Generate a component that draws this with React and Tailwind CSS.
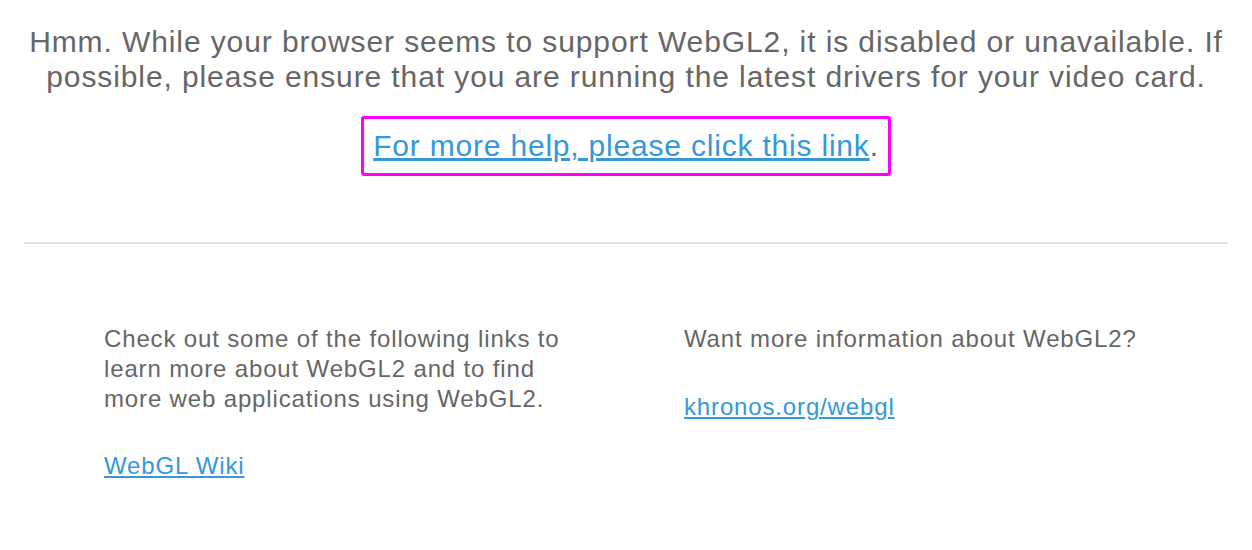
export default function App() {
    return (
        <div className="w-[1252px] h-[550px] bg-white px-[24px] pt-[24px] text-[#666666] font-['Liberation_Sans',Arial,sans-serif]">
            {/* Message */}
            <p className="text-center text-[30px] leading-[35px] tracking-[0.9px]">
                Hmm. While your browser seems to support WebGL2, it is disabled or unavailable. If possible, please ensure that you are running the latest drivers for your video card.
            </p>
            <div className="flex justify-center mt-[22px]">
                <div className="border-[3px] border-[#ff00ff] rounded-[3px] px-[9px] py-[9px] text-[30px] leading-[36px] tracking-[0.8px]">
                    <a href="#" className="text-[#3498db] underline">For more help, please click this link</a>.
                </div>
            </div>

            <hr className="mt-[66px] border-0 h-[2px] bg-[#e3e3e3]" />

            {/* Links */}
            <div className="flex mt-[80px] text-[24px] leading-[30px] tracking-[0.85px]">
                <div className="w-[580px] pl-[80px] pr-[20px]">
                    <p className="mb-[37px]">
                        Check out some of the following links to learn more about WebGL2 and to find more web applications using WebGL2.
                    </p>
                    <a href="#" className="text-[#3498db] underline">WebGL Wiki</a>
                </div>
                <div className="w-[580px] pl-[80px]">
                    <p className="mb-[38px]">Want more information about WebGL2?</p>
                    <a href="#" className="text-[#3498db] underline">khronos.org/webgl</a>
                </div>
            </div>
        </div>
    );
}
